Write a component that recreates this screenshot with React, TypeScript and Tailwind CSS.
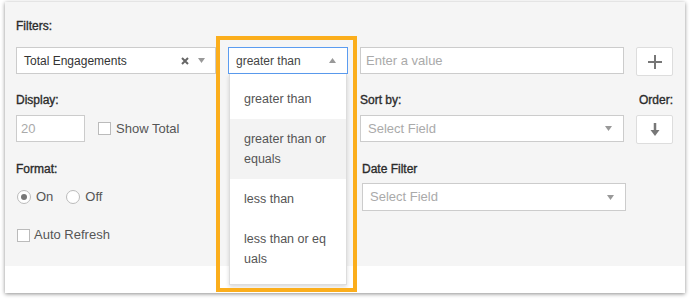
import type { ReactNode } from "react"

function Label({ children, className = "" }: { children: ReactNode; className?: string }) {
  return (
    <div
      className={`h-[18px] text-[12px] leading-[18px] text-[#2b2b2b] [-webkit-text-stroke:0.35px_#2b2b2b] ${className}`}
    >
      {children}
    </div>
  )
}

function Caret({ up = false }: { up?: boolean }) {
  return (
    <svg width="7" height="5" viewBox="0 0 7 5" className="shrink-0">
      <path d={up ? "M0 5 L3.5 0 L7 5 Z" : "M0 0 L7 0 L3.5 5 Z"} fill="#999" />
    </svg>
  )
}

function Checkbox() {
  return <span className="block size-[13px] shrink-0 border border-[#bbb] bg-white" />
}

function Radio({ on = false }: { on?: boolean }) {
  return (
    <span className="flex size-[14px] shrink-0 items-center justify-center rounded-full border border-[#bbb] bg-white">
      {on && <span className="size-[6px] rounded-full bg-[#777]" />}
    </span>
  )
}

const options = ["greater than", "greater than or equals", "less than", "less than or equals"]

export default function App() {
  return (
    <div className="h-[301px] w-[693px] bg-white pl-[5px] pt-[2px] font-['Liberation_Sans',Arial,sans-serif]">
      <div className="h-[291px] w-[680px] bg-white shadow-[0_1px_4px_rgba(0,0,0,0.45)]">
        <div className="h-[264px] bg-[#f5f5f5] pl-[11px] pt-[15px]">
          <Label>Filters:</Label>

          {/* filter row */}
          <div className="mt-3 flex items-start gap-3">
            <div className="flex h-[27px] w-[200px] items-center border border-[#ccc] bg-white pl-[7px] pr-[10px] text-[12px] text-[#333]">
              <span className="flex-1">Total Engagements</span>
              <svg width="8" height="8" viewBox="0 0 8 8" className="mr-[9px]">
                <path d="M1 1 L7 7 M7 1 L1 7" stroke="#666" strokeWidth="2" />
              </svg>
              <Caret />
            </div>

            <div className="relative w-[120px]">
              <div className="flex h-[27px] items-center border border-[#5b9cf0] bg-white pl-[7px] pr-[11px] text-[12px] text-[#444]">
                <span className="flex-1">greater than</span>
                <Caret up />
              </div>
              <ul className="absolute left-[1px] right-[1px] top-full z-10 border border-t-0 border-[#ddd] bg-white py-[5px] shadow-[0_2px_4px_rgba(0,0,0,0.15)]">
                {options.map((o, i) => (
                  <li
                    key={o}
                    className={`break-all pl-[14px] pr-[15px] py-[10px] text-[12.5px] leading-[20px] text-[#555] ${
                      i === 1 ? "bg-[#f3f3f3]" : ""
                    }`}
                  >
                    {o}
                  </li>
                ))}
              </ul>
              <div className="pointer-events-none absolute -left-[12px] -top-[11px] z-20 h-[256px] w-[141px] border-4 border-[#fbae1c]" />
            </div>

            <div className="flex h-[27px] w-[264px] items-center border border-[#ccc] bg-white pl-[5px] text-[13px] text-[#aaa]">
              Enter a value
            </div>

            <button
              type="button"
              className="flex h-[29px] w-[37px] items-center justify-center rounded-[2px] border border-[#ddd] bg-white"
            >
              <svg width="16" height="16" viewBox="0 0 16 16">
                <path d="M8 1 V15 M1 8 H15" stroke="#777" strokeWidth="2" />
              </svg>
            </button>
          </div>

          <div className="flex gap-3">
            {/* left column */}
            <div className="w-[200px]">
              <Label className="mt-[15px]">Display:</Label>
              <div className="mt-[6px] flex items-center">
                <div className="flex h-[27px] w-[69px] items-center border border-[#ccc] bg-white pl-[4px] text-[13px] text-[#aaa]">
                  20
                </div>
                <span className="ml-[13px]">
                  <Checkbox />
                </span>
                <span className="ml-[5px] text-[13px] text-[#555]">Show Total</span>
              </div>

              <Label className="mt-[18px]">Format:</Label>
              <div className="ml-[1px] mt-[10px] flex h-[18px] items-center text-[13px] text-[#555]">
                <Radio on />
                <span className="ml-[5px]">On</span>
                <span className="ml-[13px]">
                  <Radio />
                </span>
                <span className="ml-[5px]">Off</span>
              </div>

              <div className="ml-[1px] mt-[20px] flex h-[18px] items-center text-[13px] text-[#555]">
                <Checkbox />
                <span className="ml-[4px]">Auto Refresh</span>
              </div>
            </div>

            <div className="w-[120px]" />

            {/* right column */}
            <div className="w-[313px]">
              <div className="mt-[15px] flex justify-between">
                <Label>Sort by:</Label>
                <Label>Order:</Label>
              </div>
              <div className="mt-[6px] flex items-start gap-3">
                <div className="flex h-[27px] w-[264px] items-center border border-[#ccc] bg-white pl-[7px] pr-[11px] text-[13px] text-[#aaa]">
                  <span className="flex-1">Select Field</span>
                  <Caret />
                </div>
                <button
                  type="button"
                  className="flex h-[29px] w-[37px] items-center justify-center rounded-[2px] border border-[#ddd] bg-white"
                >
                  <svg width="10" height="14" viewBox="0 0 10 14">
                    <path d="M5 0 V8" stroke="#777" strokeWidth="2.5" />
                    <path d="M0.5 7 H9.5 L5 13 Z" fill="#777" />
                  </svg>
                </button>
              </div>

              <Label className="ml-[2px] mt-[16px]">Date Filter</Label>
              <div className="ml-[2px] mt-[5px] flex h-[28px] w-[264px] items-center border border-[#ccc] bg-white pl-[7px] pr-[11px] text-[13px] text-[#aaa]">
                <span className="flex-1">Select Field</span>
                <Caret />
              </div>
            </div>
          </div>
        </div>
      </div>
    </div>
  )
}
